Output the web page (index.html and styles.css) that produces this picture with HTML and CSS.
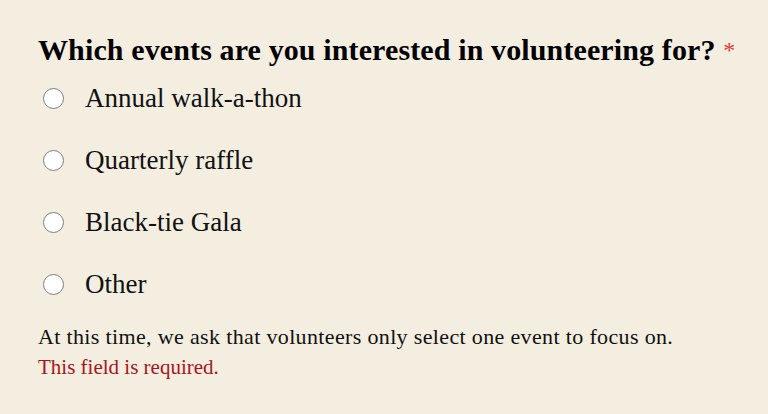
FILE: index.html
```html
<!DOCTYPE html>
<html lang="en">
<head>
    <meta charset="UTF-8">
    <meta name="viewport" content="width=device-width, initial-scale=1.0">
    <title>Volunteer events</title>
    <link rel="stylesheet" href="styles.css">
</head>
<body>

    <fieldset class="question">
        <legend class="question-title">Which events are you interested in volunteering for? <span class="required">*</span></legend>

        <div class="options">
            <label class="option"><input type="radio" name="event" value="walk"> <span>Annual walk-a-thon</span></label>
            <label class="option"><input type="radio" name="event" value="raffle"> <span>Quarterly raffle</span></label>
            <label class="option"><input type="radio" name="event" value="gala"> <span>Black-tie Gala</span></label>
            <label class="option"><input type="radio" name="event" value="other"> <span>Other</span></label>
        </div>

        <p class="hint">At this time, we ask that volunteers only select one event to focus on.</p>
        <p class="error">This field is required.</p>
    </fieldset>

</body>
</html>
```

FILE: styles.css
```css
* {
    margin: 0;
    padding: 0;
    box-sizing: border-box;
}

body {
    width: 100%;
    height: 100vh;
    background-color: #f4eee0;
    font-family: 'Liberation Serif', serif;
    color: #111;
    padding: 32px 38px;
}

.question {
    border: none;
}

.question-title {
    font-size: 30px;
    font-weight: 700;
    line-height: 36px;
    letter-spacing: 0.12px;
    white-space: nowrap;
    color: #000;
}

.required {
    color: #ea3a36;
    font-weight: 400;
    font-size: 24px;
    vertical-align: top;
}

.options {
    display: flex;
    flex-direction: column;
    gap: 30px;
    margin-top: 14px;
}

.option {
    display: flex;
    align-items: center;
    gap: 21px;
    font-size: 27px;
    line-height: 32px;
    color: #111;
}

.option input {
    appearance: none;
    width: 21px;
    height: 21px;
    margin-left: 5px;
    border-radius: 50%;
    background: #fff;
    border: 1.5px solid #7d7d7d;
}

.hint {
    margin-top: 22px;
    font-size: 22px;
    line-height: 30px;
    letter-spacing: 0.35px;
}

.error {
    font-size: 21px;
    line-height: 30px;
    color: #a8141c;
}
```
